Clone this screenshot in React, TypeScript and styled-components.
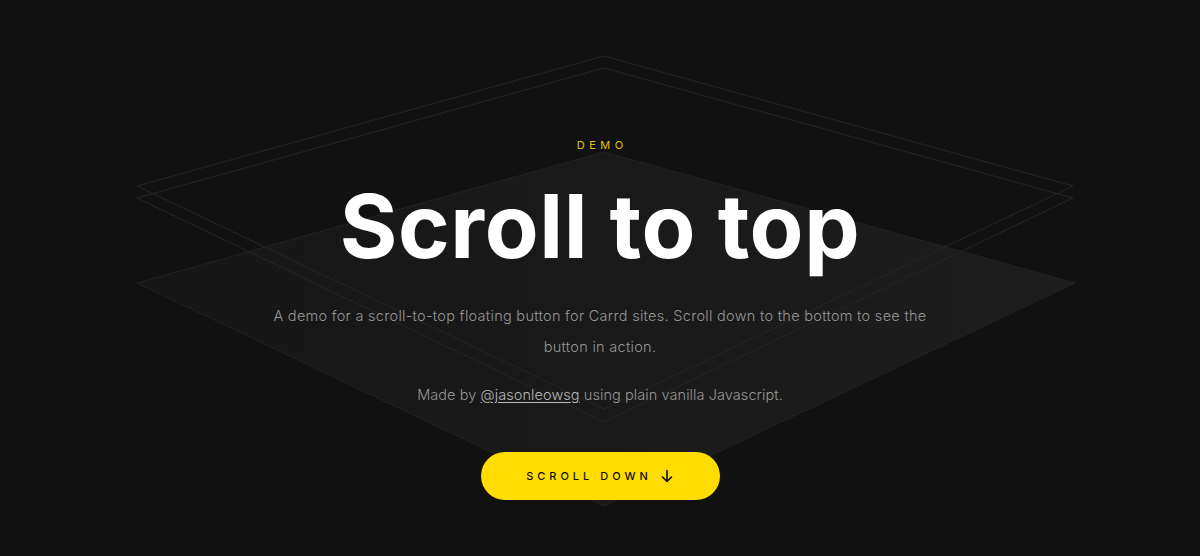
import React from "react";
import styled, { createGlobalStyle } from "styled-components";

const GlobalStyle = createGlobalStyle`
  html, body {
    margin: 0;
    padding: 0;
    background: #111111;
  }
  * { box-sizing: border-box; }
`;

const Page = styled.main`
  position: relative;
  width: 100%;
  height: 556px;
  overflow: hidden;
  background: #111111;
  font-family: Inter, "Noto Sans", sans-serif;
`;

const Backdrop = styled.svg`
  position: absolute;
  left: 0;
  top: 0;
  width: 1200px;
  height: 556px;
  pointer-events: none;
`;

const Content = styled.section`
  position: relative;
  display: flex;
  flex-direction: column;
  align-items: center;
  padding-top: 135px;
  text-align: center;
`;

const Eyebrow = styled.span`
  font-size: 11px;
  line-height: 20px;
  letter-spacing: 4.5px;
  margin-right: -4.5px;
  color: #e0c200;
  font-weight: 400;
`;

const Title = styled.h1`
  margin: 27px 0 0;
  font-size: 88px;
  line-height: 88px;
  font-weight: 700;
  letter-spacing: 0.007em;
  color: #ffffff;
`;

const Body = styled.p<{ $gap?: number }>`
  margin: ${(p) => p.$gap ?? 0}px 0 0;
  max-width: 680px;
  font-size: 14.5px;
  line-height: 31px;
  font-weight: 300;
  letter-spacing: 0.02em;
  color: #979797;
`;

const Credit = styled(Body)`
  letter-spacing: 0.005em;
`;

const Handle = styled.a`
  color: #b8b8b8;
  text-decoration: underline;
  text-underline-offset: 2px;
`;

const Action = styled.button`
  display: flex;
  align-items: center;
  justify-content: center;
  gap: 8px;
  margin-top: 42px;
  width: 239px;
  height: 48px;
  border: none;
  border-radius: 24px;
  background: #ffdd00;
  color: #111111;
  font-family: Inter, "Noto Sans", sans-serif;
  font-size: 11px;
  font-weight: 500;
  letter-spacing: 4px;
  cursor: pointer;
`;

const ArrowIcon = () => (
  <svg width="14" height="14" viewBox="0 0 14 14" fill="none" stroke="#111" strokeWidth="1.6" strokeLinecap="round" strokeLinejoin="round">
    <path d="M7 1.5v11M2.5 8l4.5 4.5L11.5 8" />
  </svg>
);

export default function App() {
  return (
    <Page>
      <GlobalStyle />
      <Backdrop viewBox="0 0 1200 556">
        <defs>
          <linearGradient id="plane" x1="0" y1="0" x2="1" y2="0">
            <stop offset="0" stopColor="#161616" />
            <stop offset="0.6" stopColor="#1a1a1a" />
            <stop offset="1" stopColor="#1d1d1d" />
          </linearGradient>
        </defs>
        <polygon points="604,152 1075,283 604,506 137,283" fill="url(#plane)" stroke="#222" strokeWidth="1" />
        <polygon points="604,56 1073,186 604,409 137,186" fill="none" stroke="#262626" strokeWidth="1" />
        <polygon points="604,68 1073,198 604,422 137,198" fill="none" stroke="#262626" strokeWidth="1" />
      </Backdrop>
      <Content>
        <Eyebrow>DEMO</Eyebrow>
        <Title>Scroll to top</Title>
        <Body $gap={30}>
          A demo for a scroll-to-top floating button for Carrd sites. Scroll down to the bottom to see the button in action.
        </Body>
        <Credit $gap={17}>
          Made by <Handle>@jasonleowsg</Handle> using plain vanilla Javascript.
        </Credit>
        <Action>
          SCROLL DOWN
          <ArrowIcon />
        </Action>
      </Content>
    </Page>
  );
}
